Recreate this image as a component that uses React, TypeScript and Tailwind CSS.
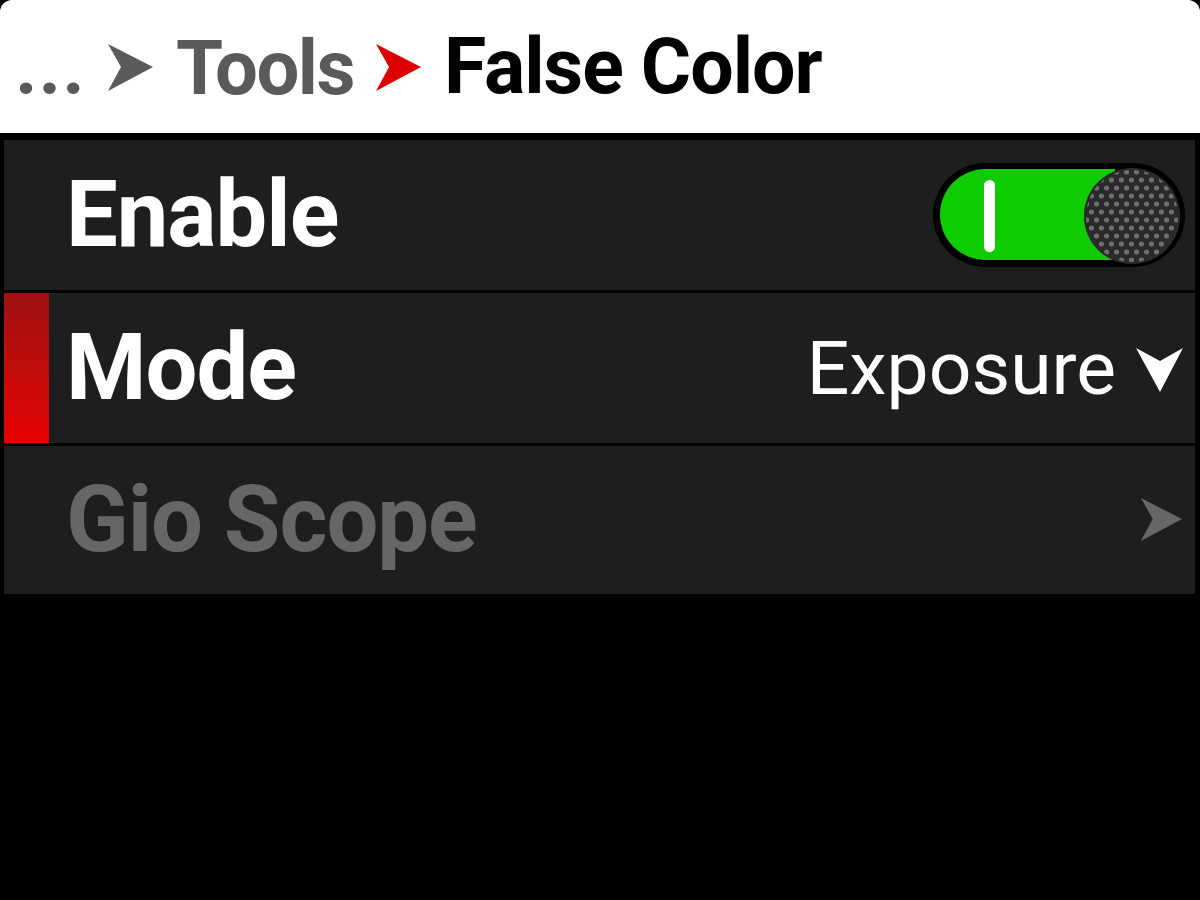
import React from 'react';

const font = { fontFamily: 'Roboto, "Noto Sans", sans-serif' };

function Chevron({ className, fill }: { className: string; fill: string }) {
  // notched arrowhead pointing right
  return (
    <svg viewBox="0 0 48 48" className={className}>
      <polygon points="2,0 47,23 2,47 15,23" fill={fill} />
    </svg>
  );
}

function Toggle() {
  return (
    <div className="relative w-[252px] h-[104px] rounded-full bg-black">
      <div className="absolute left-[7px] top-[6px] bottom-[7px] w-[175px] rounded-l-full bg-[#0ecc00]" />
      <div className="absolute left-[51px] top-[17px] w-[11px] h-[72px] rounded-full bg-white" />
      <div className="absolute right-[5px] top-[5px] w-[96px] h-[96px] rounded-full overflow-hidden bg-[#2a2a2a]">
        <svg viewBox="0 0 96 96" className="w-full h-full">
          <defs>
            <pattern id="knob" width="10" height="16" patternUnits="userSpaceOnUse">
              <circle cx="2.5" cy="4" r="2.6" fill="#707070" />
              <circle cx="7.5" cy="12" r="2.6" fill="#707070" />
            </pattern>
          </defs>
          <circle cx="48" cy="48" r="48" fill="#2a2a2a" />
          <circle cx="48" cy="48" r="46" fill="url(#knob)" />
        </svg>
      </div>
    </div>
  );
}

export default function App() {
  return (
    <div className="w-[1200px] h-[900px] bg-black overflow-hidden" style={font}>
      {/* Breadcrumb header */}
      <div className="h-[133px] bg-white rounded-t-[12px] flex items-center pl-[15px] pt-[2px]">
        <span className="text-[78px] font-bold text-[#5a5a5a] leading-none tracking-[1px]">...</span>
        <Chevron className="w-[48px] h-[48px] ml-[20px] mr-[22px]" fill="#5a5a5a" />
        <span className="text-[76px] font-bold text-[#5a5a5a] leading-none tracking-[-1.5px]">Tools</span>
        <Chevron className="w-[48px] h-[48px] ml-[20px] mr-[22px]" fill="#dd0000" />
        <span className="text-[77px] font-bold text-black leading-none tracking-[-1px]">False Color</span>
      </div>

      {/* Menu rows */}
      <div className="flex flex-col gap-[3px] pt-[7px] pl-[4px] pr-[5px]">
        <div className="h-[150px] bg-[#1e1e1e] flex items-center pr-[10px]">
          <div className="w-[45px] self-stretch" />
          <span className="ml-[17px] flex-1 text-[92px] font-bold text-white leading-none tracking-[-1px]">Enable</span>
          <Toggle />
        </div>
        <div className="h-[150px] bg-[#1e1e1e] flex items-center pr-[11px]">
          <div className="w-[45px] self-stretch bg-gradient-to-b from-[#9e1010] to-[#e60000]" />
          <span className="ml-[17px] flex-1 text-[92px] font-bold text-white leading-none tracking-[-1px]">Mode</span>
          <span className="text-[75px] text-white leading-none">Exposure</span>
          <svg viewBox="0 0 48 48" className="w-[48px] h-[48px] ml-[20px] mt-[4px]">
            <polygon points="0,2 24,15 47,2 24,46" fill="#ffffff" />
          </svg>
        </div>
        <div className="h-[148px] bg-[#1e1e1e] flex items-center pr-[12px]">
          <div className="w-[45px] self-stretch" />
          <span className="ml-[17px] flex-1 text-[92px] font-bold text-[#666666] leading-none tracking-[-1px]">Gio Scope</span>
          <Chevron className="w-[44px] h-[44px]" fill="#666666" />
        </div>
      </div>
    </div>
  );
}
